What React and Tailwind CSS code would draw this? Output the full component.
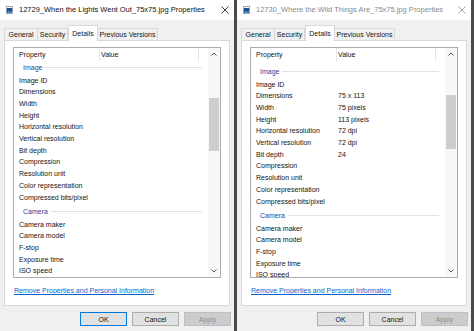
const imageProps = [
  'Image ID',
  'Dimensions',
  'Width',
  'Height',
  'Horizontal resolution',
  'Vertical resolution',
  'Bit depth',
  'Compression',
  'Resolution unit',
  'Color representation',
  'Compressed bits/pixel',
];

const cameraProps = ['Camera maker', 'Camera model', 'F-stop', 'Exposure time', 'ISO speed'];

const tabs = [
  { name: 'General', w: 'w-[34px]' },
  { name: 'Security', w: 'w-[31px]' },
  { name: 'Details', w: 'w-[30px]' },
  { name: 'Previous Versions', w: 'w-[61px]' },
];

function GroupRow({ label }) {
  return (
    <div className="flex h-[15.3px] items-center pl-[9px] pr-[6px] pt-[1px]">
      <span className="text-[#1e3f9c]">{label}</span>
      <div className="ml-[3px] h-px flex-1 bg-[#dde3ee]" />
    </div>
  );
}

function PropRow({ name, value }) {
  return (
    <div className="flex h-[11.7px] items-center pl-[5px]">
      <span className="w-[82px] shrink-0 whitespace-nowrap">{name}</span>
      <span className="whitespace-nowrap">{value}</span>
    </div>
  );
}

function FileIcon() {
  return (
    <svg width="7" height="8" viewBox="0 0 7 8">
      <rect x="0.5" y="0.5" width="6" height="7" fill="#ffffff" stroke="#9aa4b4" />
      <rect x="1" y="2" width="5" height="5" fill="#1d4f91" />
      <path d="M1 7 L3 4.5 L4.5 6 L6 4.8 L6 7 Z" fill="#4c8fd6" />
    </svg>
  );
}

function CloseIcon({ color }) {
  return (
    <svg width="8" height="8" viewBox="0 0 8 8">
      <path d="M0.5 0.5 L7.5 7.5 M7.5 0.5 L0.5 7.5" stroke={color} strokeWidth="0.9" />
    </svg>
  );
}

function PropsWindow({ title, active, values, shift }) {
  return (
    <div className="flex h-full w-[234px] flex-col bg-[#f0f0f0]">
      {/* Title bar */}
      <div className="flex h-[20px] items-center bg-white pl-[6px] pr-[5px]">
        <FileIcon />
        <span
          className={`ml-[6px] flex-1 whitespace-nowrap text-[7.5px] ${
            active ? 'text-[#111]' : 'text-[#8a8a8a]'
          }`}
        >
          {title}
        </span>
        <CloseIcon color={active ? '#222' : '#9a9a9a'} />
      </div>

      {/* Tabs */}
      <div className="mt-[5px] flex h-[15px] items-end pl-[4px]">
        {tabs.map((t) =>
          t.name === 'Details' ? (
            <div
              key={t.name}
              className={`${t.w} relative z-10 -mb-px flex h-[16px] items-center justify-center border border-b-0 border-[#d9d9d9] bg-white`}
            >
              {t.name}
            </div>
          ) : (
            <div
              key={t.name}
              className={`${t.w} flex h-[12px] items-center justify-center border border-b-0 border-[#d9d9d9] bg-[#f0f0f0] -ml-px first:ml-0`}
            >
              {t.name}
            </div>
          )
        )}
      </div>

      {/* Details panel */}
      <div className="mx-[4px] flex h-[266px] flex-col border border-[#d9d9d9] bg-white px-[8px] pt-[6px]">
        <div className="flex h-[231px] border border-[#a8abb0] bg-white">
          <div className="flex flex-1 flex-col overflow-hidden">
            <div className="relative flex h-[13px] shrink-0 items-center pl-[5px]">
              <span className="w-[82px]">Property</span>
              <span>Value</span>
              <div className="absolute left-[85px] top-0 h-full w-px bg-[#e5e5e5]" />
              <div className="absolute left-[184px] top-0 h-full w-px bg-[#e5e5e5]" />
            </div>
            <div className="flex-1 overflow-hidden">
              <div className={shift}>
                <GroupRow label="Image" />
                {imageProps.map((p) => (
                  <PropRow key={p} name={p} value={values[p]} />
                ))}
                <GroupRow label="Camera" />
                {cameraProps.map((p) => (
                  <PropRow key={p} name={p} value={values[p]} />
                ))}
              </div>
            </div>
          </div>
          {/* Scrollbar */}
          <div className="relative w-[12px] shrink-0 bg-[#f7f7f7]">
            <svg className="absolute left-[3px] top-[4px]" width="6" height="4" viewBox="0 0 6 4">
              <path d="M0.5 3.5 L3 1 L5.5 3.5" fill="none" stroke="#606060" strokeWidth="1" />
            </svg>
            <div className={`absolute left-[1px] w-[10px] bg-[#cdcdcd] ${values.thumb}`} />
            <svg className="absolute bottom-[4px] left-[3px]" width="6" height="4" viewBox="0 0 6 4">
              <path d="M0.5 0.5 L3 3 L5.5 0.5" fill="none" stroke="#606060" strokeWidth="1" />
            </svg>
          </div>
        </div>
        <div className="mt-[8px] pl-[1px] leading-[10px]">
          <span className="whitespace-nowrap text-[#0a64c8] underline underline-offset-1">
            Remove Properties and Personal Information
          </span>
        </div>
      </div>

      {/* Buttons */}
      <div className="mt-[6px] flex justify-end gap-[5px] pr-[3px]">
        <button
          className={`flex h-[14px] w-[47px] items-center justify-center border bg-[#e1e1e1] ${
            active ? 'border-[#0078d7]' : 'border-[#adadad]'
          }`}
        >
          OK
        </button>
        <button className="flex h-[14px] w-[47px] items-center justify-center border border-[#adadad] bg-[#e1e1e1]">
          Cancel
        </button>
        <button className="flex h-[14px] w-[47px] items-center justify-center border border-[#bfbfbf] bg-[#cccccc] text-[#8c8c8c]">
          Apply
        </button>
      </div>
    </div>
  );
}

export default function App() {
  const leftValues = { thumb: 'top-[50px] h-[53px]' };
  const rightValues = {
    thumb: 'top-[47px] h-[54px]',
    Dimensions: '75 x 113',
    Width: '75 pixels',
    Height: '113 pixels',
    'Horizontal resolution': '72 dpi',
    'Vertical resolution': '72 dpi',
    'Bit depth': '24',
  };

  return (
    <div
      className="flex h-[331px] w-[474px] gap-[3px] overflow-hidden bg-[#4a4a4a] text-[7px] leading-none text-[#141414]"
      style={{ fontFamily: '"Liberation Sans", Arial, sans-serif' }}
    >
      <PropsWindow
        title="12729_When the Lights Went Out_75x75.jpg Properties"
        active
        values={leftValues}
        shift="-mt-[2px]"
      />
      <PropsWindow
        title="12730_Where the Wild Things Are_75x75.jpg Properties"
        values={rightValues}
        shift="mt-[2px]"
      />
    </div>
  );
}
